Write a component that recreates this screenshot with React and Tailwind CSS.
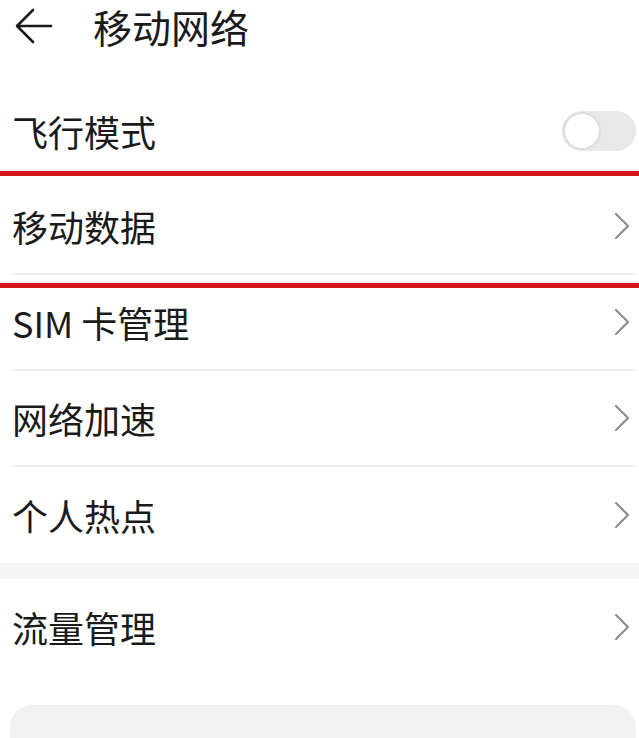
import React from 'react';

const FONT = { fontFamily: '"Noto Sans CJK SC", "Noto Sans", sans-serif' };

function Chevron() {
  return (
    <svg width="18" height="28" viewBox="0 0 18 28" fill="none" className="mr-[5px]">
      <path d="M3 2 L15 14 L3 26" stroke="#8c8c8c" strokeWidth="2.2" strokeLinecap="round" strokeLinejoin="round" />
    </svg>
  );
}

function Toggle() {
  return (
    <div className="w-[74px] h-[40px] rounded-full bg-[#e8e8e8] flex items-center pl-[1px]">
      <div className="w-[38px] h-[38px] rounded-full bg-white border-2 border-[#dcdcdc]" />
    </div>
  );
}

function Row({ label, right, divider = true }) {
  return (
    <div className={`h-[96px] flex items-center justify-between ${divider ? 'border-b-2 border-[#efefef]' : ''}`}>
      <span className="text-[36px] leading-normal text-[#1a1a1a]">{label}</span>
      {right}
    </div>
  );
}

export default function App() {
  return (
    <div className="relative w-full min-h-[738px] bg-white overflow-hidden" style={FONT}>
      {/* header */}
      <div className="h-[52px] flex items-center pl-[15px]">
        <svg width="38" height="38" viewBox="0 0 38 38" fill="none">
          <path d="M36 19 H3 M18 3 L2 19 L18 35" stroke="#1a1a1a" strokeWidth="2.6" strokeLinecap="round" strokeLinejoin="round" />
        </svg>
        <h1 className="ml-[40px] text-[39px] leading-[52px] text-[#1a1a1a]">移动网络</h1>
      </div>

      <div className="mt-[31px] pl-3 pr-[3px]">
        <Row label="飞行模式" right={<Toggle />} divider={false} />
        <Row label="移动数据" right={<Chevron />} />
        <Row label="SIM 卡管理" right={<Chevron />} />
        <Row label="网络加速" right={<Chevron />} />
        <Row label="个人热点" right={<Chevron />} divider={false} />
      </div>

      <div className="h-[16px] bg-[#f5f5f5]" />

      <div className="pl-3 pr-[3px]">
        <Row label="流量管理" right={<Chevron />} divider={false} />
      </div>

      <div className="mt-[30px] ml-[10px] mr-[3px] h-[60px] rounded-[22px] bg-[#f1f1f1]" />

      {/* red highlight annotation */}
      <div className="absolute left-0 right-0 top-[171px] h-[5px] bg-[#d7151c]" />
      <div className="absolute left-0 right-0 top-[283px] h-[5px] bg-[#d7151c]" />
    </div>
  );
}
